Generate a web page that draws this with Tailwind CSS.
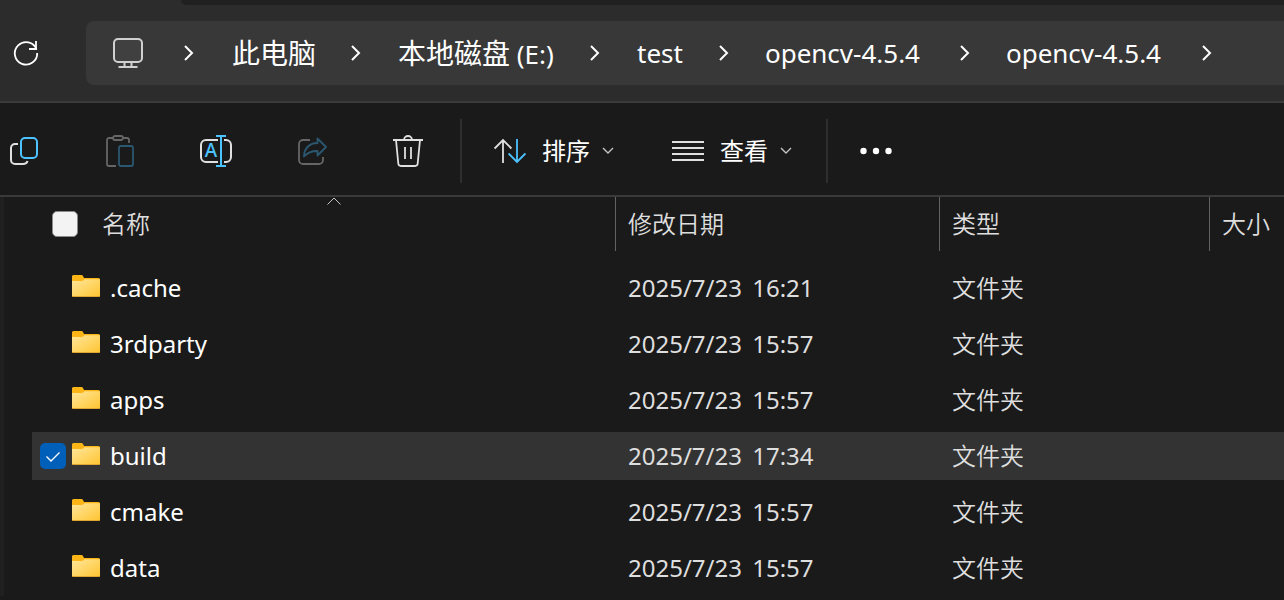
<!DOCTYPE html>
<html lang="zh-CN">
<head>
    <meta charset="UTF-8" />
    <meta name="viewport" content="width=device-width, initial-scale=1.0" />
    <title>opencv-4.5.4</title>
    <script src="https://cdn.jsdelivr.net/npm/@tailwindcss/browser@4"></script>
</head>
<body class="min-h-screen overflow-x-hidden bg-[#1a1a1a] text-white font-['Noto_Sans','Noto_Sans_CJK_SC',sans-serif]">
    <!-- Shared icons -->
    <svg class="absolute size-0">
        <defs>
            <linearGradient id="folder-front" x1="0" y1="0" x2="1" y2="1">
                <stop offset="0" stop-color="#ffe69c" />
                <stop offset="1" stop-color="#ffc530" />
            </linearGradient>
        </defs>
        <symbol id="crumb" viewBox="0 0 10 16">
            <path d="M1 1l7 7-7 7" fill="none" stroke="#fff" stroke-width="2" />
        </symbol>
        <symbol id="down" viewBox="0 0 12 8">
            <path d="M1 1l5 5 5-5" fill="none" stroke="#c4c4c4" stroke-width="1.4" />
        </symbol>
        <symbol id="folder" viewBox="0 0 28 28">
            <path d="M0 2.5A1.5 1.5 0 0 1 1.500 1H9c1 0 1.500.3 2 1l1 2h14.500A1.500 1.500 0 0 1 28 5.500V12H0z" fill="#fbb517" />
            <path d="M0 7h9.500c1 0 1.600-.3 2.200-1l.8-.8H28v16.300a1.500 1.500 0 0 1-1.500 1.500h-25A1.500 1.500 0 0 1 0 21.500z" fill="url(#folder-front)" />
            <path d="M.5 22.500h27" stroke="#e0a52c" />
        </symbol>
    </svg>

    <!-- Tab strip -->
    <div class="h-[5px] bg-[#2c2c2c] pl-[181px]">
        <div class="h-full rounded-bl-lg bg-[#202020]"></div>
    </div>

    <!-- Address bar -->
    <header class="flex items-center border-b-2 border-[#3a3a3a] bg-[#2c2c2c] py-4 pl-[10px]">
        <button type="button" aria-label="刷新" class="shrink-0">
            <svg class="size-8" viewBox="0 0 32 32" fill="none" stroke="#fff" stroke-width="1.8">
                <path d="M26.5 12.5A11.2 11.2 0 1 0 27.200 16" />
                <path d="M26 4v8h-7" />
            </svg>
        </button>
        <nav class="ml-11 h-16 min-w-0 grow rounded-l-lg bg-[#383838] pl-[26px]">
            <ol class="flex h-full items-center whitespace-nowrap text-[26px]">
                <li class="mr-10 shrink-0">
                    <svg class="size-8" viewBox="0 0 32 32" fill="none" stroke="#d0d0d0" stroke-width="2">
                        <rect x="2" y="2" width="28" height="23" rx="4" fill="#404040" />
                        <path d="M12.5 25v5M19.5 25v5M6.5 30h19" />
                    </svg>
                </li>
                <li class="flex shrink-0 items-center">
                    <svg class="mr-[38px] h-4 w-[10px]"><use href="#crumb" /></svg>
                    <a href="#" class="mr-[35px] min-w-[84px] text-[28px]">此电脑</a>
                </li>
                <li class="flex shrink-0 items-center">
                    <svg class="mr-[37px] h-4 w-[10px]"><use href="#crumb" /></svg>
                    <a href="#" class="mr-[36px] min-w-[156px]"><span class="text-[28px]">本地磁盘</span> (E:)</a>
                </li>
                <li class="flex shrink-0 items-center">
                    <svg class="mr-[37px] h-4 w-[10px]"><use href="#crumb" /></svg>
                    <a href="#" class="mr-[36px] min-w-[45px]">test</a>
                </li>
                <li class="flex shrink-0 items-center">
                    <svg class="mr-[36px] h-4 w-[10px]"><use href="#crumb" /></svg>
                    <a href="#" class="mr-[36px] min-w-[159px]">opencv-4.5.4</a>
                </li>
                <li class="flex shrink-0 items-center">
                    <svg class="mr-[36px] h-4 w-[10px]"><use href="#crumb" /></svg>
                    <a href="#" class="mr-[37px] min-w-[159px]">opencv-4.5.4</a>
                </li>
                <li class="shrink-0">
                    <svg class="h-4 w-[10px]"><use href="#crumb" /></svg>
                </li>
            </ol>
        </nav>
    </header>

    <!-- Command bar -->
    <div class="flex items-center border-b-2 border-[#3a3a3a] pt-4 pb-3 pl-2 text-2xl whitespace-nowrap">
        <div class="flex shrink-0 gap-16">
            <button type="button" aria-label="复制">
                <svg class="size-8" viewBox="0 0 32 32" fill="none" stroke-width="2">
                    <path d="M10 9H7a4 4 0 0 0-4 4v12a4 4 0 0 0 4 4h8c2.500 0 4-1 4.500-3" stroke="#e0e0e0" />
                    <rect x="13" y="3" width="16" height="20" rx="4" stroke="#4cc2ff" />
                </svg>
            </button>
            <button type="button" aria-label="粘贴" disabled>
                <svg class="size-8" viewBox="0 0 32 32" fill="none" stroke="#666" stroke-width="1.8">
                    <path d="M9 3H5a2 2 0 0 0-2 2v24a2 2 0 0 0 2 2h7M19 3h4a2 2 0 0 1 2 2v3" />
                    <rect x="9" y="1" width="10" height="4" rx="2" />
                    <rect x="15" y="11" width="14" height="20" rx="2" stroke="#2b5870" />
                </svg>
            </button>
            <button type="button" aria-label="重命名">
                <svg class="size-8" viewBox="0 0 32 32" fill="none" stroke="#e0e0e0" stroke-width="2">
                    <path d="M18 5H6a5 5 0 0 0-5 5v12a5 5 0 0 0 5 5h12M24 5h2a5 5 0 0 1 5 5v12a5 5 0 0 1-5 5h-2" />
                    <path d="M16 1h10M16 31h10M21 1v30" stroke="#4cc2ff" />
                    <text x="11" y="22" text-anchor="middle" font-size="19" font-weight="500" fill="#4cc2ff" stroke="none">A</text>
                </svg>
            </button>
            <button type="button" aria-label="共享" disabled>
                <svg class="size-8" viewBox="0 0 32 32" fill="none" stroke="#666" stroke-width="1.8">
                    <path d="M14 5H7a4 4 0 0 0-4 4v16a4 4 0 0 0 4 4h16a4 4 0 0 0 4-4v-3" />
                    <path d="M21.500 3.500L30 12l-8.500 8.500V16C16 16 11.500 17.500 8 21.500 8 13.500 13.500 8 21.500 8z" stroke="#2b5870" stroke-linejoin="round" />
                </svg>
            </button>
            <button type="button" aria-label="删除">
                <svg class="size-8" viewBox="0 0 32 32" fill="none" stroke="#e0e0e0" stroke-width="1.8">
                    <path d="M1 5h30M12 5a4 4 0 0 1 8 0M4 5l2.300 23.500A2.700 2.700 0 0 0 9 31h14a2.700 2.700 0 0 0 2.700-2.500L28 5" />
                    <path d="M13 12v12M19 12v12" />
                </svg>
            </button>
        </div>
        <div class="mr-8 ml-9 h-16 w-[2px] shrink-0 bg-[#2e2e2e]"></div>
        <div class="flex shrink-0 gap-[58px]">
            <button type="button" class="flex items-center">
                <svg class="mr-4 size-8" viewBox="0 0 32 32" fill="none" stroke-width="1.8">
                    <path d="M9 28V5M.6 13.500L9 5l8.400 8.500" stroke="#e0e0e0" />
                    <path d="M23 4v23M14.600 18.500L23 27l8.400-8.500" stroke="#4cc2ff" />
                </svg>
                排序
                <svg class="ml-3 h-2 w-3"><use href="#down" /></svg>
            </button>
            <button type="button" class="flex items-center">
                <svg class="mr-4 size-8" viewBox="0 0 32 32" stroke="#e0e0e0" stroke-width="2">
                    <path d="M0 7h32M0 13h32M0 19h32M0 25h32" />
                </svg>
                查看
                <svg class="ml-3 h-2 w-3"><use href="#down" /></svg>
            </button>
        </div>
        <div class="mr-8 ml-[34px] h-16 w-[2px] shrink-0 bg-[#2e2e2e]"></div>
        <button type="button" aria-label="查看更多" class="shrink-0">
            <svg class="size-8" viewBox="0 0 32 32" fill="#fff">
                <circle cx="3.500" cy="16" r="3.200" />
                <circle cx="16" cy="16" r="3.200" />
                <circle cx="28.500" cy="16" r="3.200" />
            </svg>
        </button>
    </div>

    <!-- File list -->
    <main class="border-l-4 border-[#202020] pl-7">
        <table class="w-full table-fixed border-separate border-spacing-0 text-left text-2xl whitespace-nowrap text-[#dedede]">
            <colgroup>
                <col class="w-[583px]" />
                <col class="w-[324px]" />
                <col class="w-[270px]" />
                <col />
            </colgroup>
            <thead>
                <tr class="h-[63px] align-top">
                    <th class="p-0 font-[350]">
                        <div class="relative ml-5 flex h-[54px] items-center gap-6">
                            <input type="checkbox" id="all" aria-label="全选" class="size-[26px] appearance-none rounded-[5px] border border-[#8a8a8a] bg-[#f3f3f3]" />
                            <span>名称</span>
                            <svg class="absolute top-0 left-1/2 h-2 w-[14px] -translate-x-1/2" viewBox="0 0 14 8">
                                <path d="M.5 7.500L7 1l6.500 6.500" fill="none" stroke="#c4c4c4" />
                            </svg>
                        </div>
                    </th>
                    <th class="p-0 font-[350]"><div class="flex h-[54px] items-center border-l border-[#636363] pl-3">修改日期</div></th>
                    <th class="p-0 font-[350]"><div class="flex h-[54px] items-center border-l border-[#636363] pl-3">类型</div></th>
                    <th class="p-0 font-[350]"><div class="flex h-[54px] items-center border-l border-[#636363] pl-3">大小</div></th>
                </tr>
            </thead>
            <tbody>
                <tr class="h-14">
                    <td class="border-y-4 border-transparent py-0 pr-0 pl-2">
                        <div class="flex items-center">
                            <input type="checkbox" id="f1" class="mr-[6px] size-[26px] appearance-none" />
                            <svg class="mr-[10px] size-7"><use href="#folder" /></svg>
                            <label for="f1" class="text-white">.cache</label>
                        </div>
                    </td>
                    <td class="border-y-4 border-transparent py-0 pr-0 pl-[13px]">2025/7/23 <span class="ml-1">16:21</span></td>
                    <td class="border-y-4 border-transparent py-0 pr-0 pl-[13px] font-[350]">文件夹</td>
                    <td class="border-y-4 border-transparent p-0"></td>
                </tr>
                <tr class="h-14">
                    <td class="border-y-4 border-transparent py-0 pr-0 pl-2">
                        <div class="flex items-center">
                            <input type="checkbox" id="f2" class="mr-[6px] size-[26px] appearance-none" />
                            <svg class="mr-[10px] size-7"><use href="#folder" /></svg>
                            <label for="f2" class="text-white">3rdparty</label>
                        </div>
                    </td>
                    <td class="border-y-4 border-transparent py-0 pr-0 pl-[13px]">2025/7/23 <span class="ml-1">15:57</span></td>
                    <td class="border-y-4 border-transparent py-0 pr-0 pl-[13px] font-[350]">文件夹</td>
                    <td class="border-y-4 border-transparent p-0"></td>
                </tr>
                <tr class="h-14">
                    <td class="border-y-4 border-transparent py-0 pr-0 pl-2">
                        <div class="flex items-center">
                            <input type="checkbox" id="f3" class="mr-[6px] size-[26px] appearance-none" />
                            <svg class="mr-[10px] size-7"><use href="#folder" /></svg>
                            <label for="f3" class="text-white">apps</label>
                        </div>
                    </td>
                    <td class="border-y-4 border-transparent py-0 pr-0 pl-[13px]">2025/7/23 <span class="ml-1">15:57</span></td>
                    <td class="border-y-4 border-transparent py-0 pr-0 pl-[13px] font-[350]">文件夹</td>
                    <td class="border-y-4 border-transparent p-0"></td>
                </tr>
                <!-- Hovered row -->
                <tr class="h-14">
                    <td class="border-y-4 border-transparent bg-[#333333] bg-clip-padding py-0 pr-0 pl-2">
                        <div class="flex items-center">
                            <span class="relative mr-[6px] size-[26px]">
                                <input type="checkbox" id="f4" checked class="block size-[26px] appearance-none rounded-[5px] bg-[#005fb8]" />
                                <svg class="pointer-events-none absolute inset-0 size-[26px]" viewBox="0 0 26 26">
                                    <path d="M6.500 13.500l4.500 4.500 8.500-8.500" fill="none" stroke="#fff" stroke-width="1.4" />
                                </svg>
                            </span>
                            <svg class="mr-[10px] size-7"><use href="#folder" /></svg>
                            <label for="f4" class="text-white">build</label>
                        </div>
                    </td>
                    <td class="border-y-4 border-transparent bg-[#333333] bg-clip-padding py-0 pr-0 pl-[13px]">2025/7/23 <span class="ml-1">17:34</span></td>
                    <td class="border-y-4 border-transparent bg-[#333333] bg-clip-padding py-0 pr-0 pl-[13px] font-[350]">文件夹</td>
                    <td class="border-y-4 border-transparent bg-[#333333] bg-clip-padding p-0"></td>
                </tr>
                <tr class="h-14">
                    <td class="border-y-4 border-transparent py-0 pr-0 pl-2">
                        <div class="flex items-center">
                            <input type="checkbox" id="f5" class="mr-[6px] size-[26px] appearance-none" />
                            <svg class="mr-[10px] size-7"><use href="#folder" /></svg>
                            <label for="f5" class="text-white">cmake</label>
                        </div>
                    </td>
                    <td class="border-y-4 border-transparent py-0 pr-0 pl-[13px]">2025/7/23 <span class="ml-1">15:57</span></td>
                    <td class="border-y-4 border-transparent py-0 pr-0 pl-[13px] font-[350]">文件夹</td>
                    <td class="border-y-4 border-transparent p-0"></td>
                </tr>
                <tr class="h-14">
                    <td class="border-y-4 border-transparent py-0 pr-0 pl-2">
                        <div class="flex items-center">
                            <input type="checkbox" id="f6" class="mr-[6px] size-[26px] appearance-none" />
                            <svg class="mr-[10px] size-7"><use href="#folder" /></svg>
                            <label for="f6" class="text-white">data</label>
                        </div>
                    </td>
                    <td class="border-y-4 border-transparent py-0 pr-0 pl-[13px]">2025/7/23 <span class="ml-1">15:57</span></td>
                    <td class="border-y-4 border-transparent py-0 pr-0 pl-[13px] font-[350]">文件夹</td>
                    <td class="border-y-4 border-transparent p-0"></td>
                </tr>
            </tbody>
        </table>
    </main>
</body>
</html>
